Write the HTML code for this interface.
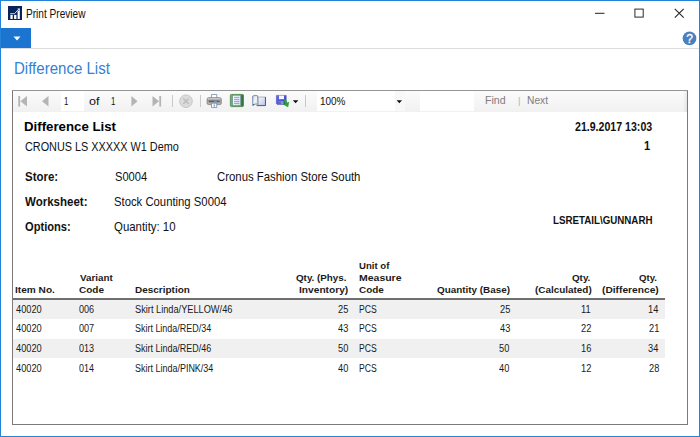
<!DOCTYPE html>
<html>
<head>
<meta charset="utf-8">
<title>Print Preview</title>
<style>
html,body{margin:0;padding:0;}
body{width:700px;height:437px;overflow:hidden;background:#fff;position:relative;font-family:"Liberation Sans",sans-serif;color:#000;}
.abs,.t{position:absolute;}
.t{white-space:nowrap;line-height:1;transform-origin:0 0;}
.ui{font-family:"Liberation Sans",sans-serif;}
.b{font-weight:bold;}
#win{position:absolute;left:0;top:0;width:698px;height:435px;border:1px solid #2483d8;}
#menu{position:absolute;left:1px;top:28px;width:30px;height:20px;background:#1b75d0;}
#menuline{position:absolute;left:1px;top:48px;width:698px;height:1px;background:#dcdcdc;}
#box{position:absolute;left:12px;top:90px;width:674px;height:333px;border:1px solid #7a7a7a;border-top-color:#8e8e8e;background:#fff;}
#tb{position:absolute;left:13px;top:91px;width:674px;height:20.6px;background:linear-gradient(#fbfbfb,#f1f1f1);}
.fld{position:absolute;background:#fff;top:91px;height:20.4px;}
.sep{position:absolute;width:1.3px;top:95.3px;height:12.2px;background:#c9c9c9;}
.row{position:absolute;left:13px;width:652px;background:#f0f0f0;}
.h{font-weight:bold;font-size:9.8px;color:#1a1a1a;}
.c{font-size:9.2px;color:#1a1a1a;}
.r{text-align:right;}
</style>
</head>
<body>
<div id="win"></div>

<!-- title bar -->
<svg class="abs" style="left:8px;top:6px" width="14" height="14" viewBox="0 0 14 14">
  <rect x="0" y="0" width="14" height="14" fill="#06235a"/>
  <rect x="2.4" y="8.9" width="2.3" height="4.1" fill="#fff"/>
  <rect x="6.1" y="8.9" width="2.3" height="4.1" fill="#fff"/>
  <rect x="9.6" y="4.6" width="2.2" height="8.4" fill="#fff"/>
  <path d="M2.1 7.7 H6.5 L10.4 3.4" stroke="#fff" stroke-width="0.8" fill="none"/>
  <path d="M9.3 2.4 H11.8 V5 Z" fill="#fff"/>
</svg>
<div class="t ui" id="tt" style="left:26.3px;top:8.8px;font-size:11.9px;color:#111;transform:scaleX(0.85);transform-origin:0 0;">Print Preview</div>

<svg class="abs" style="left:590px;top:4px" width="100" height="20" viewBox="0 0 100 20">
  <path d="M5 9.3 H14.5" stroke="#222" stroke-width="1" fill="none"/>
  <rect x="44.9" y="5.1" width="8.3" height="8" stroke="#2a2a2a" stroke-width="1" fill="none"/>
  <path d="M84.8 4.8 L93.7 13.7 M93.7 4.8 L84.8 13.7" stroke="#222" stroke-width="1.05" fill="none"/>
</svg>

<!-- menu -->
<div id="menu"></div>
<svg class="abs" style="left:13.2px;top:36px" width="8" height="5" viewBox="0 0 8 5"><path d="M0.5 0.5 H7.5 L4 4.5 Z" fill="#fff"/></svg>
<div id="menuline"></div>
<svg class="abs" style="left:682px;top:31px" width="15" height="15" viewBox="0 0 15 15">
  <circle cx="7.5" cy="7.4" r="6.85" fill="#4a80bd"/>
  <text x="7.6" y="11.7" text-anchor="middle" font-family="Liberation Sans, sans-serif" font-size="12" fill="#fff" stroke="#fff" stroke-width="0.3">?</text>
</svg>

<!-- page title -->


<!-- viewer box -->
<div id="box"></div>
<div id="tb"></div>
<div class="abs" style="left:12px;top:89.6px;width:676px;height:1.5px;background:#969696;"></div>
<div class="abs" style="left:683px;top:91px;width:4px;height:20.6px;background:linear-gradient(90deg,rgba(0,0,0,0),rgba(0,0,0,0.07));"></div>
<div class="fld" style="left:61px;width:23px;"></div>
<div class="fld" style="left:317px;width:78px;"></div>
<div class="fld" style="left:395px;width:10px;background:#f8f8f8;"></div>
<div class="fld" style="left:420px;width:54px;"></div>

<!-- toolbar icons -->
<svg class="abs" id="nav" style="left:13px;top:91px" width="300" height="21" viewBox="0 0 300 21">
  <defs>
    <linearGradient id="gpr" x1="0" y1="0" x2="0" y2="1"><stop offset="0" stop-color="#dedede"/><stop offset="0.4" stop-color="#a2a2a2"/><stop offset="1" stop-color="#b4b4b4"/></linearGradient>
    <linearGradient id="ggr" x1="0" y1="0" x2="1" y2="0"><stop offset="0" stop-color="#7fbf7a"/><stop offset="0.2" stop-color="#4f9f4d"/><stop offset="0.8" stop-color="#3f8a3f"/><stop offset="1" stop-color="#2c6a2f"/></linearGradient>
    <linearGradient id="gpg" x1="0" y1="0" x2="1" y2="1"><stop offset="0" stop-color="#ffffff"/><stop offset="1" stop-color="#d3dcf4"/></linearGradient>
    <linearGradient id="gbl" x1="0" y1="0" x2="1" y2="1"><stop offset="0" stop-color="#c2c9d8"/><stop offset="0.5" stop-color="#f2f4f9"/><stop offset="1" stop-color="#cfd6e6"/></linearGradient>
    <linearGradient id="gbk" x1="0" y1="0" x2="1" y2="1"><stop offset="0" stop-color="#f4f7ff"/><stop offset="1" stop-color="#b9c9ee"/></linearGradient>
    <linearGradient id="gsv" x1="0" y1="0" x2="1" y2="1"><stop offset="0" stop-color="#6b70ee"/><stop offset="1" stop-color="#3237c0"/></linearGradient>
  </defs>
  <!-- first -->
  <rect x="5.3" y="5" width="1.8" height="10.5" fill="#b4b4b4"/>
  <path d="M14 5 V15.5 L7.4 10.25 Z" fill="#b4b4b4"/>
  <!-- prev -->
  <path d="M35.5 5 V15.5 L29 10.25 Z" fill="#b4b4b4"/>
  <!-- next -->
  <path d="M118.4 5 V15.5 L124.5 10.25 Z" fill="#b4b4b4"/>
  <!-- last -->
  <path d="M139.5 5 V15.5 L146 10.25 Z" fill="#b4b4b4"/>
  <rect x="146.3" y="5" width="1.8" height="10.5" fill="#b4b4b4"/>
  <!-- stop -->
  <circle cx="173" cy="10.2" r="6.3" fill="#dcdcdc" stroke="#c6c6c6" stroke-width="1"/>
  <path d="M170.3 7.5 L175.7 12.9 M175.7 7.5 L170.3 12.9" stroke="#bdbdbd" stroke-width="1.6" fill="none"/>
  <!-- printer -->
  <g>
    <rect x="198.6" y="3.6" width="5.2" height="4" fill="#fbfcfe" stroke="#7f90ad" stroke-width="0.8"/>
    <path d="M195.8 6.6 H206.6 Q208.3 6.6 208.3 8.3 V12.3 Q208.3 13.6 206.8 13.6 H195.6 Q194.1 13.6 194.1 12.3 V8.3 Q194.1 6.6 195.8 6.6 Z" fill="url(#gpr)" stroke="#777" stroke-width="0.7"/>
    <rect x="195.8" y="9.5" width="10.8" height="1.7" fill="#5e5f61"/>
    <rect x="201" y="9.6" width="2.9" height="1.4" fill="#45a2f2"/>
    <rect x="198.6" y="12.2" width="5.2" height="4.3" fill="#fdfdff" stroke="#7a8cab" stroke-width="0.8"/>
    <rect x="200.7" y="13.4" width="1.1" height="2.2" fill="#3f8fe6"/>
  </g>
  <!-- page layout -->
  <g>
    <rect x="217.3" y="3.4" width="13.2" height="12.2" rx="1" fill="url(#ggr)" stroke="#3c7f3c" stroke-width="0.7"/>
    <rect x="219.7" y="4.3" width="7.9" height="10.2" fill="url(#gpg)" stroke="#6d86a8" stroke-width="0.5"/>
    <path d="M221 6.4 H226.3 M221 8.4 H226.3 M221 10.4 H226.3 M221 12.4 H226.3" stroke="#7a8fc0" stroke-width="0.8"/>
  </g>
  <!-- book -->
  <g>
    <path d="M239.6 5.2 Q241.6 3.6 244.6 4.8 L245 13.2 Q242.4 12.4 239.8 14.4 Z" fill="url(#gbl)" stroke="#64779a" stroke-width="0.8"/>
    <path d="M239.6 14.2 L241.2 13.2" stroke="#3d5f9a" stroke-width="1" fill="none"/>
    <rect x="245.2" y="6" width="7" height="8.2" fill="url(#gbk)" stroke="#8a8f9c" stroke-width="0.6"/>
    <path d="M252.5 6 V14.6 H243.6" stroke="#5e5e5e" stroke-width="1" fill="none"/>
  </g>
  <!-- save -->
  <g>
    <path d="M263.4 4.4 H273.2 V13.5 H264.3 L263.4 12.6 Z" fill="url(#gsv)" stroke="#3b40c0" stroke-width="0.5"/>
    <rect x="266" y="4.6" width="5" height="3.6" fill="#f6f6fc"/>
    <rect x="265.6" y="10.2" width="5" height="3.3" fill="#9094c4"/>
    <rect x="266.3" y="10.8" width="1.4" height="2.2" fill="#4f52a8"/>
    <path d="M270.6 8.8 L272.4 8 L274.2 11.8 L276 11 L275 16 L270.4 13.6 L272.2 12.8 Z" fill="#27a633" stroke="#1f8a2a" stroke-width="0.3"/>
  </g>
  <path d="M279.8 9.3 H285.4 L282.6 12.3 Z" fill="#111"/>
</svg>
<div class="sep" style="left:171.8px;"></div>
<div class="sep" style="left:199.7px;"></div>
<div class="sep" style="left:305.2px;"></div>
<svg class="abs" style="left:396px;top:99px" width="7" height="5" viewBox="0 0 7 5"><path d="M0.6 1.2 H6 L3.3 4.2 Z" fill="#111"/></svg>


<!-- table decorations -->
<div class="abs" id="hl" style="left:13px;top:298.2px;width:652px;height:1.8px;background:#6f6f6f;"></div>
<div class="row" style="top:300px;height:18.5px;"></div>
<div class="row" style="top:338.7px;height:19.3px;"></div>

<!--TEXT-START-->
<div class="t b" id="r1" style="left:24.04px;top:120.04px;font-size:13.3px;color:#000;transform:scaleX(0.9963);">Difference List</div>
<div class="t" id="r2" style="left:24.66px;top:140.74px;font-size:12px;color:#111;transform:scaleX(0.9044);">CRONUS LS XXXXX W1 Demo</div>
<div class="t b" id="r3" style="left:575.38px;top:120.74px;font-size:12px;color:#111;transform:scaleX(0.8830);">21.9.2017 13:03</div>
<div class="t b" id="r4" style="left:643.62px;top:140.24px;font-size:12px;color:#111;transform:scaleX(0.9250);">1</div>
<div class="t b" id="l1" style="left:25.31px;top:170.64px;font-size:12px;color:#111;transform:scaleX(0.9537);">Store:</div>
<div class="t" id="v1" style="left:114.70px;top:171.27px;font-size:12.2px;color:#111;transform:scaleX(0.9127);">S0004</div>
<div class="t" id="v1b" style="left:217.23px;top:171.27px;font-size:12.2px;color:#111;transform:scaleX(0.9327);">Cronus Fashion Store South</div>
<div class="t b" id="l2" style="left:25.20px;top:196.04px;font-size:12px;color:#111;transform:scaleX(0.9591);">Worksheet:</div>
<div class="t" id="v2" style="left:114.39px;top:196.17px;font-size:12.2px;color:#111;transform:scaleX(0.9275);">Stock Counting S0004</div>
<div class="t b" id="l3" style="left:24.86px;top:220.74px;font-size:12px;color:#111;transform:scaleX(0.9266);">Options:</div>
<div class="t" id="v3" style="left:114.39px;top:220.97px;font-size:12.2px;color:#111;transform:scaleX(0.9370);">Quantity: 10</div>
<div class="t b" id="usr" style="left:552.77px;top:215.77px;font-size:10.2px;color:#111;transform:scaleX(0.9570);">LSRETAIL\GUNNARH</div>
<div class="t" id="pt" style="left:14.10px;top:61.13px;font-size:15.8px;color:#3580d6;transform:scaleX(0.9519);">Difference List</div>
<div class="t" id="pg1" style="left:64.01px;top:95.51px;font-size:11.8px;color:#111;transform:scaleX(0.6624);">1</div>
<div class="t" id="of" style="left:88.80px;top:95.51px;font-size:11.8px;color:#111;transform:scaleX(1.0660);">of</div>
<div class="t" id="pg2" style="left:110.71px;top:95.51px;font-size:11.8px;color:#111;transform:scaleX(0.6624);">1</div>
<div class="t" id="zoom" style="left:319.85px;top:95.51px;font-size:11.8px;color:#111;transform:scaleX(0.8440);">100%</div>
<div class="t" id="find" style="left:484.65px;top:94.91px;font-size:11.8px;color:#7d7d7d;transform:scaleX(0.9015);">Find</div>
<div class="t" id="bar" style="left:518.15px;top:95.56px;font-size:9.5px;color:#b4b4b4;transform:scaleX(1.0526);">|</div>
<div class="t" id="next" style="left:526.98px;top:94.91px;font-size:11.8px;color:#7d7d7d;transform:scaleX(0.8668);">Next</div>
<div class="t b" id="h1" style="left:15.44px;top:284.95px;font-size:9.75px;color:#1a1a1a;transform:scaleX(1.0364);">Item No.</div>
<div class="t b" id="h2a" style="left:79.65px;top:272.85px;font-size:9.75px;color:#1a1a1a;transform:scaleX(1.0071);">Variant</div>
<div class="t b" id="h2b" style="left:79.30px;top:284.95px;font-size:9.75px;color:#1a1a1a;transform:scaleX(1.0256);">Code</div>
<div class="t b" id="h3" style="left:134.75px;top:284.95px;font-size:9.75px;color:#1a1a1a;transform:scaleX(1.0228);">Description</div>
<div class="t b" id="h4a" style="left:295.91px;top:272.85px;font-size:9.75px;color:#1a1a1a;transform:scaleX(1.0053);">Qty. (Phys.</div>
<div class="t b" id="h4b" style="left:299.14px;top:284.95px;font-size:9.75px;color:#1a1a1a;transform:scaleX(1.0452);">Inventory)</div>
<div class="t b" id="h5a" style="left:358.63px;top:260.65px;font-size:9.75px;color:#1a1a1a;transform:scaleX(0.9828);">Unit of</div>
<div class="t b" id="h5b" style="left:358.52px;top:272.85px;font-size:9.75px;color:#1a1a1a;transform:scaleX(1.0749);">Measure</div>
<div class="t b" id="h5c" style="left:358.80px;top:284.95px;font-size:9.75px;color:#1a1a1a;transform:scaleX(1.0172);">Code</div>
<div class="t b" id="h6" style="left:437.00px;top:284.95px;font-size:9.75px;color:#1a1a1a;transform:scaleX(1.0130);">Quantity (Base)</div>
<div class="t b" id="h7a" style="left:572.11px;top:272.85px;font-size:9.75px;color:#1a1a1a;transform:scaleX(1.0053);">Qty.</div>
<div class="t b" id="h7b" style="left:535.35px;top:284.95px;font-size:9.75px;color:#1a1a1a;transform:scaleX(1.0165);">(Calculated)</div>
<div class="t b" id="h8a" style="left:639.32px;top:272.85px;font-size:9.75px;color:#1a1a1a;transform:scaleX(0.9821);">Qty.</div>
<div class="t b" id="h8b" style="left:602.24px;top:284.95px;font-size:9.75px;color:#1a1a1a;transform:scaleX(1.0472);">(Difference)</div>
<div class="t" id="a1" style="left:15.92px;top:304.74px;font-size:10.0px;color:#1a1a1a;transform:scaleX(0.9248);">40020</div>
<div class="t" id="b1" style="left:79.38px;top:304.74px;font-size:10.0px;color:#1a1a1a;transform:scaleX(0.9057);">006</div>
<div class="t" id="c1" style="left:135.09px;top:304.74px;font-size:10.0px;color:#1a1a1a;transform:scaleX(0.9222);">Skirt Linda/YELLOW/46</div>
<div class="t" id="d1" style="left:338.20px;top:304.74px;font-size:10.0px;color:#1a1a1a;transform:scaleX(0.9250);">25</div>
<div class="t" id="e1" style="left:358.51px;top:304.74px;font-size:10.0px;color:#1a1a1a;transform:scaleX(0.8630);">PCS</div>
<div class="t" id="f1" style="left:499.50px;top:304.74px;font-size:10.0px;color:#1a1a1a;transform:scaleX(0.9250);">25</div>
<div class="t" id="g1" style="left:581.44px;top:304.74px;font-size:10.0px;color:#1a1a1a;transform:scaleX(0.9250);">11</div>
<div class="t" id="i1" style="left:648.36px;top:304.74px;font-size:10.0px;color:#1a1a1a;transform:scaleX(0.9250);">14</div>
<div class="t" id="a2" style="left:15.92px;top:323.74px;font-size:10.0px;color:#1a1a1a;transform:scaleX(0.9248);">40020</div>
<div class="t" id="b2" style="left:79.38px;top:323.74px;font-size:10.0px;color:#1a1a1a;transform:scaleX(0.9085);">007</div>
<div class="t" id="c2" style="left:135.10px;top:323.74px;font-size:10.0px;color:#1a1a1a;transform:scaleX(0.8951);">Skirt Linda/RED/34</div>
<div class="t" id="d2" style="left:338.20px;top:323.74px;font-size:10.0px;color:#1a1a1a;transform:scaleX(0.9250);">43</div>
<div class="t" id="e2" style="left:358.51px;top:323.74px;font-size:10.0px;color:#1a1a1a;transform:scaleX(0.8630);">PCS</div>
<div class="t" id="f2" style="left:499.50px;top:323.74px;font-size:10.0px;color:#1a1a1a;transform:scaleX(0.9250);">43</div>
<div class="t" id="g2" style="left:580.75px;top:323.74px;font-size:10.0px;color:#1a1a1a;transform:scaleX(0.9250);">22</div>
<div class="t" id="i2" style="left:648.55px;top:323.74px;font-size:10.0px;color:#1a1a1a;transform:scaleX(0.9250);">21</div>
<div class="t" id="a3" style="left:15.92px;top:343.74px;font-size:10.0px;color:#1a1a1a;transform:scaleX(0.9248);">40020</div>
<div class="t" id="b3" style="left:79.38px;top:343.74px;font-size:10.0px;color:#1a1a1a;transform:scaleX(0.9057);">013</div>
<div class="t" id="c3" style="left:135.10px;top:343.74px;font-size:10.0px;color:#1a1a1a;transform:scaleX(0.8967);">Skirt Linda/RED/46</div>
<div class="t" id="d3" style="left:338.16px;top:343.74px;font-size:10.0px;color:#1a1a1a;transform:scaleX(0.9250);">50</div>
<div class="t" id="e3" style="left:358.51px;top:343.74px;font-size:10.0px;color:#1a1a1a;transform:scaleX(0.8630);">PCS</div>
<div class="t" id="f3" style="left:499.46px;top:343.74px;font-size:10.0px;color:#1a1a1a;transform:scaleX(0.9250);">50</div>
<div class="t" id="g3" style="left:580.70px;top:343.74px;font-size:10.0px;color:#1a1a1a;transform:scaleX(0.9250);">16</div>
<div class="t" id="i3" style="left:648.36px;top:343.74px;font-size:10.0px;color:#1a1a1a;transform:scaleX(0.9250);">34</div>
<div class="t" id="a4" style="left:15.92px;top:363.74px;font-size:10.0px;color:#1a1a1a;transform:scaleX(0.9248);">40020</div>
<div class="t" id="b4" style="left:79.39px;top:363.74px;font-size:10.0px;color:#1a1a1a;transform:scaleX(0.8972);">014</div>
<div class="t" id="c4" style="left:135.10px;top:363.74px;font-size:10.0px;color:#1a1a1a;transform:scaleX(0.8977);">Skirt Linda/PINK/34</div>
<div class="t" id="d4" style="left:338.16px;top:363.74px;font-size:10.0px;color:#1a1a1a;transform:scaleX(0.9250);">40</div>
<div class="t" id="e4" style="left:358.51px;top:363.74px;font-size:10.0px;color:#1a1a1a;transform:scaleX(0.8630);">PCS</div>
<div class="t" id="f4" style="left:499.46px;top:363.74px;font-size:10.0px;color:#1a1a1a;transform:scaleX(0.9250);">40</div>
<div class="t" id="g4" style="left:580.75px;top:363.74px;font-size:10.0px;color:#1a1a1a;transform:scaleX(0.9250);">12</div>
<div class="t" id="i4" style="left:648.50px;top:363.74px;font-size:10.0px;color:#1a1a1a;transform:scaleX(0.9250);">28</div>
<!--TEXT-END-->

</body>
</html>
